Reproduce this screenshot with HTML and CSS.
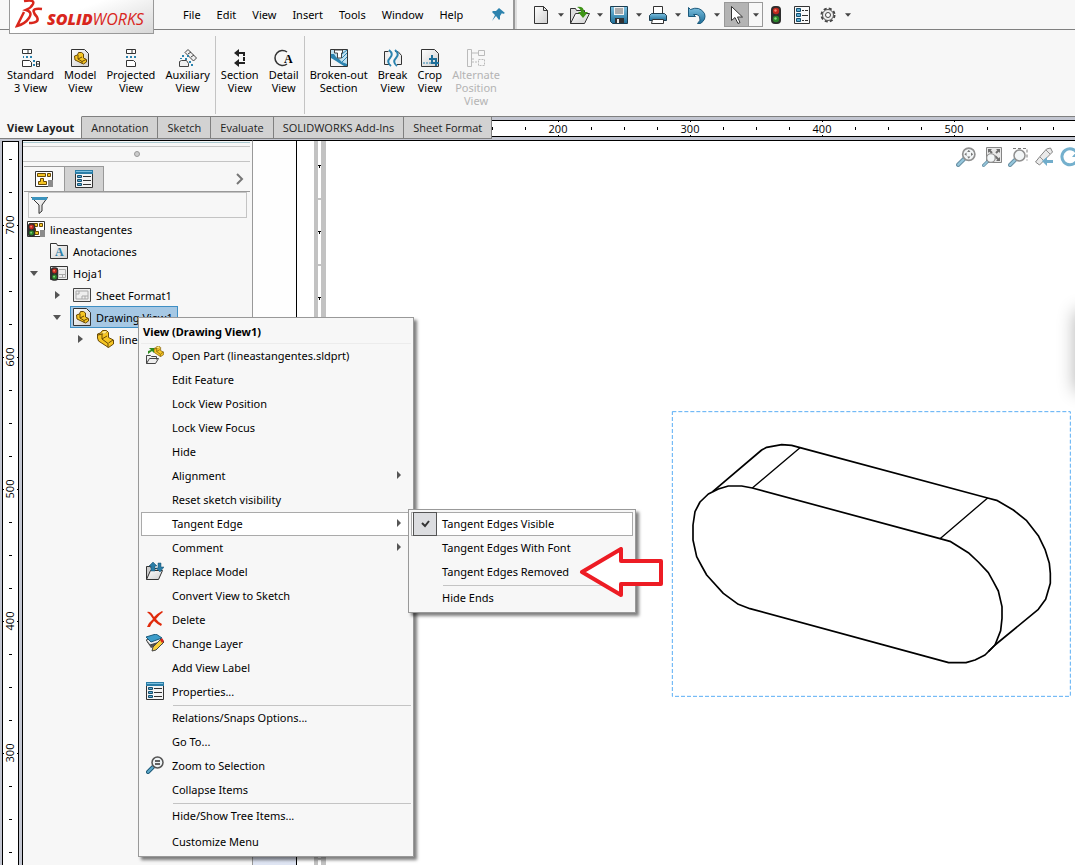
FILE: index.html
```html
<!DOCTYPE html>
<html lang="en">
<head>
  <meta charset="UTF-8">
  <title>SOLIDWORKS - lineastangentes</title>
  <meta name="viewport" content="width=device-width, initial-scale=1.0">
  <link rel="stylesheet" href="styles.css">
</head>
<body>

  <!-- shared icons -->
  <svg class="sprite" aria-hidden="true">
    <defs>
      <linearGradient id="paper" x1="0" y1="0" x2="1" y2="1">
        <stop offset="0" stop-color="#fff"/><stop offset="1" stop-color="#cfcfcf"/>
      </linearGradient>
      <linearGradient id="blue" x1="0" y1="0" x2="0" y2="1">
        <stop offset="0" stop-color="#7cc0e0"/><stop offset="1" stop-color="#1e6f99"/>
      </linearGradient>
    </defs>
    <symbol id="part" viewBox="0 0 18 18">
      <path d="M1.500 4l3-1 2-2.500 4 0 2 2v5l5 2.500v4l-5 3.500L2.500 11l-1-3z" fill="#f5c523" stroke="#6a4a06"/>
      <path d="M6 4v5l6 4.500v4M6 4l-4 1M6 4l5-2M12.500 13l4.500-3M6 9l5-3" fill="none" stroke="#6a4a06"/>
      <path d="M6 3l2-2 2 0 1 1-3 2z" fill="#ffe98a"/>
    </symbol>
    <symbol id="view" viewBox="0 0 18 18">
      <path d="M.5.5h13l4 4v13H.5z" fill="url(#paper)" stroke="#333"/>
      <path d="M3.500 7l3-1 1-2.500h3l2 1.500v4l3 1.500v2.500l-3 2-8.500-4z" fill="#f5c523" stroke="#6a4a06"/>
      <path d="M7 6v4l4 2.500v2M11 12.500l4-2M7 10l4-2" fill="none" stroke="#6a4a06"/>
    </symbol>
    <symbol id="list" viewBox="0 0 18 18">
      <path d="M.5.5h17v17H.5z" fill="#f4f4f4" stroke="#333"/>
      <path d="M0 0h18v4H0z" fill="#2b7da6"/><path d="M1 1h16v1H1z" fill="#7cc0e0"/>
      <path d="M2.500 5.500h4v2h-4zM2.500 9.500h4v2h-4zM2.500 13.500h4v2h-4z" fill="#59abd2" stroke="#174f6e"/>
      <path d="M8 6.500h8M8 10.500h8M8 14.500h8" stroke="#333"/>
    </symbol>
    <symbol id="options" viewBox="0 0 16 18">
      <path d="M.5.500h15v17H.5z" fill="#fafafa" stroke="#333"/>
      <path d="M2.500 2.500h4v3h-4zM2.500 7.500h4v3h-4zM2.500 12.500h4v3h-4z" fill="#59abd2" stroke="#174f6e"/>
      <path d="M8 4.500h2M11 4.500h3M8 9.500h6M8 14.500h2M11 14.500h3" stroke="#333"/>
    </symbol>
    <symbol id="traffic" viewBox="0 0 12 18">
      <rect x="1" y="0" width="10" height="18" rx="4" fill="#2d2d2d"/>
      <circle cx="6" cy="5" r="3.200" fill="#c0281d"/><circle cx="5.500" cy="4.500" r="1.200" fill="#ff8874"/>
      <circle cx="6" cy="13" r="3.200" fill="#2a852a"/><circle cx="5.500" cy="12.500" r="1.200" fill="#8fdc82"/>
    </symbol>
    <symbol id="drawing" viewBox="0 0 18 18">
      <path d="M.5 1.500h17v15H.5z" fill="#fff" stroke="#333"/>
      <path d="M2.500 3.500h8v3h-8zM12.500 3.500h3v3h-3zM5.500 8.500h3v3h3v3h-8v-3h2z" fill="#f5c523" stroke="#6a4a06"/>
      <path d="M13 10h5v7h-5z" fill="#8b8b8b"/>
    </symbol>
    <symbol id="lens" viewBox="0 0 18 18">
      <path d="M2 16l5-5" stroke="#1c5877" stroke-width="4" stroke-linecap="round"/>
      <path d="M2 16l5-5" stroke="#5eaacb" stroke-width="2" stroke-linecap="round"/>
      <circle cx="11.500" cy="6.500" r="5.500" fill="#eef2f4" stroke="#555" stroke-width="1.500"/>
    </symbol>
    <symbol id="caret" viewBox="0 0 7 4"><path d="M0 0h7L3.500 4z" fill="#444"/></symbol>
    <symbol id="right" viewBox="0 0 5 8"><path d="M0 0l5 4-5 4z" fill="#555"/></symbol>
    <symbol id="down" viewBox="0 0 8 5"><path d="M0 0h8L4 5z" fill="#555"/></symbol>
  </svg>

  <header class="titlebar">
    <div class="logo">
      <svg class="logo-mark" viewBox="0 0 28 28" aria-hidden="true">
        <path d="M9 1Q20-1 18 4Q16 8 11 10Q18 12 14 18Q10 24 2 26L9 12" fill="none" stroke="#d9261c" stroke-width="2.500"/>
        <path d="M27 9Q19 8 18.500 11Q19 14 22 17Q25 23 14 23" fill="none" stroke="#d9261c" stroke-width="2.500"/>
      </svg>
      <span class="logo-text"><b>SOLID</b>WORKS</span>
    </div>
    <nav class="menubar">
      <button>File</button>
      <button>Edit</button>
      <button>View</button>
      <button>Insert</button>
      <button>Tools</button>
      <button>Window</button>
      <button>Help</button>
    </nav>
    <button class="pin" aria-label="Pin menu">
      <svg width="13" height="13" viewBox="0 0 13 13"><path d="M7 0l6 5-2 1-1-1-2 3v3l-1 1-3-4-4 5 3-6-3-3 1-1h3l2-2z" fill="#2d83ae"/></svg>
    </button>
    <div class="quickbar">
      <div class="split">
        <button class="main" aria-label="New"><svg width="14" height="18" viewBox="0 0 14 18"><path d="M.5.5h9l4 4v13H.5z" fill="url(#paper)" stroke="#333"/><path d="M9.500.5v4h4" fill="none" stroke="#333"/></svg></button>
        <button class="more" aria-label="New options"><svg width="6" height="4"><use href="#caret"/></svg></button>
      </div>
      <div class="split">
        <button class="main" aria-label="Open"><svg width="20" height="18" viewBox="0 0 20 18"><path d="M.5 17.500v-15h5l1 2h8v4" fill="#ddd" stroke="#333"/><path d="M.5 17.500l5-10h14l-5 10z" fill="url(#paper)" stroke="#333"/><path d="M7 1q7-1 7 5h4l-5 6-5-6h3q0-3-4-5z" fill="#3f9417"/></svg></button>
        <button class="more" aria-label="Open options"><svg width="6" height="4"><use href="#caret"/></svg></button>
      </div>
      <div class="split">
        <button class="main" aria-label="Save"><svg width="18" height="18" viewBox="0 0 18 18"><path d="M.5.5h17v17h-15l-2-2z" fill="url(#blue)" stroke="#1b3d50"/><path d="M4 1h10v8H4z" fill="#f2f2f2"/><path d="M5 3h8M5 5h8M5 7h8" stroke="#666"/><path d="M5 12h9v5H5z" fill="#333"/><path d="M7 13h2v4H7z" fill="#eee"/></svg></button>
        <button class="more" aria-label="Save options"><svg width="6" height="4"><use href="#caret"/></svg></button>
      </div>
      <div class="split">
        <button class="main" aria-label="Print"><svg width="18" height="18" viewBox="0 0 18 18"><path d="M4.500 7.500v-7h9v7" fill="#fff" stroke="#333"/><path d="M.5 9.500l2-2h13l2 2v5H.5z" fill="url(#blue)" stroke="#1b3d50"/><path d="M3.500 13.500h11v4h-12z" fill="#fff" stroke="#333"/></svg></button>
        <button class="more" aria-label="Print options"><svg width="6" height="4"><use href="#caret"/></svg></button>
      </div>
      <div class="split">
        <button class="main" aria-label="Undo"><svg width="18" height="18" viewBox="0 0 18 18"><path d="M.5 1.500l2 2q9-4 14 4 2 6-4 10h-3q4-3 2-7-2-3-6-2l2 2H.5z" fill="url(#blue)" stroke="#1d5a7c"/></svg></button>
        <button class="more" aria-label="Undo options"><svg width="6" height="4"><use href="#caret"/></svg></button>
      </div>
      <div class="split pressed">
        <button class="main" aria-label="Select"><svg width="12" height="18" viewBox="0 0 12 18"><path d="M.5.5v14l3.500-3 3 6 2-1-2.500-5.500h5z" fill="#fff" stroke="#333"/></svg></button>
        <button class="more" aria-label="Select options"><svg width="6" height="4"><use href="#caret"/></svg></button>
      </div>
      <button class="tool" aria-label="Rebuild"><svg width="12" height="18"><use href="#traffic"/></svg></button>
      <button class="tool" aria-label="File properties"><svg width="16" height="18"><use href="#options"/></svg></button>
      <button class="tool" aria-label="Options"><svg width="16" height="16" viewBox="0 0 16 16"><circle cx="8" cy="8" r="6.500" fill="none" stroke="#444" stroke-width="2" stroke-dasharray="3 2.100"/><circle cx="8" cy="8" r="5.500" fill="#eee" stroke="#555"/><circle cx="8" cy="8" r="2.500" fill="#fff" stroke="#444"/></svg></button>
      <button class="more last" aria-label="More options"><svg width="6" height="4"><use href="#caret"/></svg></button>
    </div>
  </header>

  <div class="ribbon">
    <div class="group">
      <button>
        <svg width="18" height="18" viewBox="0 0 18 18"><path d="M.5.500h9v4h-9zM6 .5v4M.5 17.500v-6h7l2 2v4zM14.500 12.500h3v5h-3zM14.500 15h3" fill="#fff" stroke="#333"/><path d="M1 7h1v2H1zM4 7h2v2H4zM8 7h2v2H8zM11 11h2v2h-2zM11 15h2v2h-2z" fill="#2b83af"/></svg>
        <span>Standard<br>3 View</span>
      </button>
      <button>
        <svg width="18" height="18"><use href="#view"/></svg>
        <span>Model<br>View</span>
      </button>
      <button>
        <svg width="18" height="18" viewBox="0 0 18 18"><path d="M4.500.500h9v4h-9zM10 .5v4M4.500 17.500v-6h7l2 2v4z" fill="#fff" stroke="#333"/><path d="M4 7h2v2H4zM8 7h2v2H8zM12 7h2v2h-2z" fill="#2b83af"/></svg>
        <span>Projected<br>View</span>
      </button>
      <button>
        <svg width="18" height="18" viewBox="0 0 18 18"><path d="M.5 17.500v-5l2-1h5l2 3v3zM9 .5l8.500 8.500-3 3L6 3.500zM9 5l3-2M12 8l3-2" fill="#f0f0f0" stroke="#444"/><path d="M3 6h2v2H3zM6 9h2v2H6zM10 12h2v2h-2zM1 9h2v1H1zM12 15h2v2h-2zM8 6h2v2H8z" fill="#2b83af"/></svg>
        <span>Auxiliary<br>View</span>
      </button>
    </div>
    <div class="group">
      <button>
        <svg width="18" height="18" viewBox="0 0 18 18"><path d="M13 4H6M13 14H6" stroke="#222" stroke-width="2"/><path d="M3 4l5-4v8zM3 14l5-4v8z" fill="#222"/><path d="M13 3v12" stroke="#222" stroke-width="2" stroke-dasharray="4 1"/></svg>
        <span>Section<br>View</span>
      </button>
      <button>
        <svg width="20" height="18" viewBox="0 0 20 18"><path d="M13 3a7.500 7.500 0 1 0 0 12" fill="none" stroke="#333" stroke-width="1.500"/><text x="10" y="14" class="serif-glyph">A</text></svg>
        <span>Detail<br>View</span>
      </button>
    </div>
    <div class="group">
      <button>
        <svg width="18" height="18" viewBox="0 0 18 18"><path d="M.5.500h17v17H.5z" fill="#bfe0ef" stroke="#333"/><path d="M1 7l5 1 2 3 5 2 4 4H1z" fill="#f4f4f4"/><path d="M1 5l3 0 2 3 3 2 3 3 5 2v2h-3l-5-3-3-2-5-3z" fill="#2b83af"/><path d="M12 5l5-4M12 9l5-5M12 13l5-5" stroke="#2b83af"/><path d="M4.500 1h8v3h-1v5h-4V4h-3z" fill="#fff" stroke="#444"/></svg>
        <span>Broken-out<br>Section</span>
      </button>
      <button>
        <svg width="18" height="18" viewBox="0 0 18 18"><path d="M4.500 2.500h-4v13h5M11 2.500h3l3.500 4v9H13" fill="#eee" stroke="#333"/><path d="M5 1q5 4 1 8t1 8M11 1q5 4 1 8t1 8" fill="none" stroke="#2b83af" stroke-width="2"/></svg>
        <span>Break<br>View</span>
      </button>
      <button>
        <svg width="18" height="18" viewBox="0 0 18 18"><path d="M.5.500h13l4 4v13H.5z" fill="url(#paper)" stroke="#333"/><path d="M11 6v8h7M8 10h7v7" fill="none" stroke="#1f6f99" stroke-width="2"/><path d="M2 14h8" stroke="#2b83af" stroke-dasharray="2 1"/></svg>
        <span>Crop<br>View</span>
      </button>
      <button disabled>
        <svg width="18" height="18" viewBox="0 0 18 18"><path d="M.5.500h4v17h-4zM11.500 1.500h6v5h-6zM5 4h6" fill="none" stroke="#bbb"/><path d="M11.500 10.500h6v6h-6zM5 13h6M5 10h3" fill="none" stroke="#bbb" stroke-dasharray="2 1"/></svg>
        <span>Alternate<br>Position<br>View</span>
      </button>
    </div>
  </div>

  <div class="tabrow">
    <div class="tabs">
      <button class="active">View Layout</button>
      <button>Annotation</button>
      <button>Sketch</button>
      <button>Evaluate</button>
      <button>SOLIDWORKS Add-Ins</button>
      <button>Sheet Format</button>
    </div>
    <div class="ruler-h">
      <svg width="100%" height="15">
        <defs>
          <pattern id="ticks-h" width="132" height="15" patternUnits="userSpaceOnUse">
            <path d="M0 6h1v3H0zM33 6h1v3h-1zM99 6h1v3h-1zM66 0h1v1h-1zM66 14h1v1h-1z"/>
          </pattern>
        </defs>
        <rect width="100%" height="15" fill="url(#ticks-h)"/>
        <text x="66" y="12">200</text>
        <text x="198" y="12">300</text>
        <text x="330" y="12">400</text>
        <text x="462" y="12">500</text>
      </svg>
    </div>
  </div>

  <main class="workspace">
    <div class="ruler-v">
      <svg width="15" height="100%">
        <defs>
          <pattern id="ticks-v" width="15" height="132" patternUnits="userSpaceOnUse">
            <path d="M6 17h3v1H6zM6 50h3v1H6zM6 116h3v1H6zM0 83h1v1H0zM14 83h1v1h-1z"/>
          </pattern>
        </defs>
        <rect width="15" height="100%" fill="url(#ticks-v)"/>
        <text transform="translate(11 83) rotate(-90)">700</text>
        <text transform="translate(11 215) rotate(-90)">600</text>
        <text transform="translate(11 347) rotate(-90)">500</text>
        <text transform="translate(11 479) rotate(-90)">400</text>
        <text transform="translate(11 611) rotate(-90)">300</text>
      </svg>
    </div>

    <aside class="panel">
      <div class="grip"><i></i></div>
      <div class="panel-tabs">
        <button aria-label="Feature tree"><svg width="18" height="18"><use href="#drawing"/></svg></button>
        <button class="on" aria-label="Property manager"><svg width="18" height="18"><use href="#list"/></svg></button>
        <button class="expand" aria-label="Expand"><svg width="8" height="12" viewBox="0 0 8 12"><path d="M1 1l5 5-5 5" fill="none" stroke="#777" stroke-width="2"/></svg></button>
      </div>
      <div class="filter">
        <svg width="18" height="18" viewBox="0 0 18 18"><path d="M.5 1.500h16L11 9v6l-3 2.500V9z" fill="url(#paper)" stroke="#333"/><path d="M1 1h15v3H1z" fill="#3b93bd"/></svg>
        <input type="text" aria-label="Filter">
      </div>
      <ul class="tree">
        <li><div class="node root"><svg width="18" height="18" viewBox="0 0 18 18"><use href="#drawing"/><use href="#traffic" x="0" y="3" width="9" height="14"/></svg>lineastangentes</div>
          <ul>
            <li><div class="node"><span class="twist"></span><svg width="18" height="18" viewBox="0 0 18 18"><path d="M.5 16.500v-15h6l1 2h10v13z" fill="url(#paper)" stroke="#333"/><text x="5" y="14" class="serif-glyph blue">A</text></svg>Anotaciones</div></li>
            <li><div class="node"><span class="twist"><svg width="8" height="5"><use href="#down"/></svg></span><svg width="18" height="18" viewBox="0 0 18 18"><path d="M.5 2.500h17v13H.5z" fill="#eee" stroke="#333"/><path d="M9 5.500h6.500v8H9M9 10.500h6M12.500 10v3" fill="none" stroke="#aaa"/><use href="#traffic" x="0" y="3" width="9" height="14"/></svg>Hoja1</div>
              <ul>
                <li><div class="node"><span class="twist"><svg width="5" height="8"><use href="#right"/></svg></span><svg width="18" height="18" viewBox="0 0 18 18"><path d="M.5 2.500h17v13H.5z" fill="#eee" stroke="#444"/><path d="M3 13V5h12v8zM3 8h3V5M9 13v-3h6M12 10v3" fill="none" stroke="#aaa"/></svg>Sheet Format1</div></li>
                <li><div class="node"><span class="twist"><svg width="8" height="5"><use href="#down"/></svg></span><span class="selected"><svg width="18" height="18"><use href="#view"/></svg>Drawing View1</span></div>
                  <ul>
                    <li><div class="node"><span class="twist"><svg width="5" height="8"><use href="#right"/></svg></span><svg width="18" height="18"><use href="#part"/></svg>lineastangentes</div></li>
                  </ul>
                </li>
              </ul>
            </li>
          </ul>
        </li>
      </ul>
    </aside>

    <div class="gutter"></div>

    <section class="canvas">
      <!-- sheet border -->
      <svg class="sheet-edge" width="12" height="100%">
        <defs>
          <pattern id="edge" width="12" height="66" patternUnits="userSpaceOnUse">
            <path d="M0 0h4v66H0zM7 0h5v66H7z" fill="#c2c2c2"/>
            <path d="M4 0h3v66H4z" fill="#fff"/>
            <path d="M0 57h12v2H0z" fill="#c2c2c2"/>
            <path d="M4 24h3v1h-1v2H5v-2H4z"/>
          </pattern>
        </defs>
        <rect width="12" height="100%" fill="url(#edge)"/>
      </svg>

      <div class="hud">
        <button aria-label="Zoom to fit"><svg width="20" height="20" viewBox="0 0 18 18"><use href="#lens"/><path d="M11.500 2.500l1.500 2h-3zM11.500 10.500l1.500-2h-3zM7.500 6.500l2-1.500v3zM15.500 6.500l-2-1.500v3z" fill="#333"/></svg></button>
        <button aria-label="Zoom to area"><svg width="20" height="20" viewBox="0 0 20 20"><path d="M4.500.5h15v15h-15z" fill="#ddd" stroke="#444"/><path d="M6 2h4L6 6zM18 2h-4l4 4zM18 14h-4l4-4z" fill="#222"/><path d="M7 3l3 3M17 3l-3 3M17 13l-4-4" stroke="#222" stroke-width="2"/><use href="#lens" x="0" y="6" width="14" height="14"/></svg></button>
        <button aria-label="Zoom in/out"><svg width="20" height="20" viewBox="0 0 20 20"><path d="M5 1.500h14v12" fill="none" stroke="#333" stroke-dasharray="3 2"/><use href="#lens" x="0" y="2" width="18" height="18"/></svg></button>
        <button aria-label="Previous view"><svg width="20" height="20" viewBox="0 0 20 20"><path d="M1.500 15l4-5 7-8 4-1 2 4-8 8-5 5z" fill="#e0e0e0" stroke="#444"/><path d="M6 10l4 4M12 3l4 4" stroke="#555"/><path d="M8 14l5-4v3h6v3h-6v3z" fill="#2682b0"/></svg></button>
        <button aria-label="Rotate view"><svg width="20" height="20" viewBox="0 0 20 20"><path d="M16 15a8 8 0 1 1 1-9" fill="none" stroke="#2a86b3" stroke-width="3"/><path d="M19 2v8h-7z" fill="#2a86b3"/></svg></button>
      </div>

      <div class="flyout"></div>

      <svg class="drawing-view" width="415" height="310" viewBox="0 0 1245 930" role="img" aria-label="Drawing View1">
        <rect x="37" y="35" width="1194" height="854" class="bounds"/>
        <g class="edges">
          <path d="M277 264L840 416L870 424L925 458L955 486L985 518L1000 545L1015 573L1026 620L1026 655L1022 692L1005 735L975 765L945 780L918 788L866 788L270 626L235 613L190 580L140 525L125 498L110 470L99 420L99 375L105 335L120 306L145 282L175 267L205 258L245 258Z"/>
          <path d="M158 275L305 150L320 142L365 134L395 136L420 143L983 294L1010 301L1060 330L1100 362L1135 407L1155 448L1168 490L1171 520L1171 550L1157 598L1135 628L1005 735L985 755"/>
          <path d="M277 264L420 143M840 416L983 294" class="tangent"/>
        </g>
      </svg>
    </section>
  </main>

  <div class="menu context">
    <h2>View (Drawing View1)</h2>
    <ul>
      <li><button><svg width="18" height="18" viewBox="0 0 18 18"><use href="#part" x="7" y="0" width="11" height="11"/><path d="M.5 17.500V9.500h4l1 1h5v3M.5 17.500l3-5h9l-3 5z" fill="#eee" stroke="#444"/><path d="M2 8V5l3-1-2-2h5v5L6 5z" fill="#2e8b1e"/></svg>Open Part (lineastangentes.sldprt)</button></li>
      <li><button>Edit Feature</button></li>
      <li><button>Lock View Position</button></li>
      <li><button>Lock View Focus</button></li>
      <li><button>Hide</button></li>
      <li><button class="has-sub">Alignment</button></li>
      <li><button>Reset sketch visibility</button></li>
      <li class="open">
        <button class="has-sub hover">Tangent Edge</button>
        <div class="menu submenu">
          <ul>
            <li><button class="hover checked"><span class="check"><svg width="9" height="8" viewBox="0 0 9 8"><path d="M1 3l3 3 4-5" fill="none" stroke="#333" stroke-width="2"/></svg></span>Tangent Edges Visible</button></li>
            <li><button>Tangent Edges With Font</button></li>
            <li><button>Tangent Edges Removed</button></li>
            <li class="sep"></li>
            <li><button>Hide Ends</button></li>
          </ul>
        </div>
      </li>
      <li><button class="has-sub">Comment</button></li>
      <li><button><svg width="18" height="18" viewBox="0 0 18 18"><path d="M.5 17.500v-13h4l1 2h9v3" fill="#ccc" stroke="#333"/><path d="M.5 17.500l4-9h12l-4 9z" fill="url(#paper)" stroke="#333"/><path d="M7 0l4 4H9v5H5V4H3zM12 1h3v4h3l-4 5-4-4h2z" fill="#2b7da6" stroke="#174f6e" stroke-width=".5"/></svg>Replace Model</button></li>
      <li><button>Convert View to Sketch</button></li>
      <li><button><svg width="18" height="18" viewBox="0 0 18 18"><path d="M1 2q4-1 7 5 4-4 8-6l1 1q-4 3-7 7 3 4 6 5l-1 2q-4-2-7-5-3 3-4 6l-3 0q2-5 6-8Q5 5 1 2z" fill="#e02b0c"/></svg>Delete</button></li>
      <li><button><svg width="18" height="18" viewBox="0 0 18 18"><path d="M1 8l4 6 12-4-3-4z" fill="#555"/><path d="M0 6l4 5 13-4-4-4z" fill="#eee" stroke="#444"/><path d="M0 3l10-3 6 4L5 8z" fill="#3c9cc9" stroke="#1a5a7b"/><path d="M6 17l1-4 8-8 3 3-8 8z" fill="#f7cf3a" stroke="#444"/><path d="M14 6l2-2 2 3-2 2z" fill="#d4251b"/></svg>Change Layer</button></li>
      <li><button>Add View Label</button></li>
      <li><button><svg width="18" height="18"><use href="#list"/></svg>Properties...</button></li>
      <li class="sep"></li>
      <li><button>Relations/Snaps Options...</button></li>
      <li><button>Go To...</button></li>
      <li><button><svg width="18" height="18" viewBox="0 0 18 18"><use href="#lens"/><path d="M9 5h5M9 8h5" stroke="#333" stroke-width="1.500"/></svg>Zoom to Selection</button></li>
      <li><button>Collapse Items</button></li>
      <li class="sep"></li>
      <li><button>Hide/Show Tree Items...</button></li>
      <li class="sep blank"></li>
      <li><button>Customize Menu</button></li>
    </ul>
  </div>

  <svg class="pointer" width="86" height="52" viewBox="0 0 86 52" aria-hidden="true">
    <path d="M3 25L42 2V14H82V37H42V48Z" fill="#fff" stroke="#ed1c24" stroke-width="4" stroke-linejoin="round"/>
  </svg>

</body>
</html>
```

FILE: styles.css
```css
:root {
  --face: #f7f7f7;
  --line: #808080;
  --frame: #c3c6d1;
  --tab: #d2d2d2;
}

* {
  margin: 0;
  padding: 0;
  box-sizing: border-box;
}

body {
  position: relative;
  display: flex;
  flex-direction: column;
  height: 100vh;
  overflow: hidden;
  background: #fff;
  color: #000;
  font-family: "Noto Sans", "Open Sans", sans-serif;
  font-size: 11px;
  line-height: 13px;
}

button, input {
  border: 0;
  background: none;
  color: inherit;
  font: inherit;
}

ul {
  list-style: none;
}

svg {
  flex: none;
}

.sprite {
  position: absolute;
  width: 0;
  height: 0;
}

.serif-glyph {
  font: bold 12px "Liberation Serif", serif;
}

.serif-glyph.blue {
  fill: #2b7da6;
}

/* title bar */
.titlebar {
  display: flex;
  align-items: center;
  height: 30px;
  padding-left: 175px;
  background: var(--face);
  border-bottom: 1px solid var(--line);
}

.logo {
  position: absolute;
  top: 0;
  left: 9px;
  z-index: 2;
  display: flex;
  align-items: center;
  gap: 4px;
  width: 145px;
  height: 34px;
  padding-left: 5px;
  background: linear-gradient(160deg, #fff 40%, #d8d8d8);
  border: 1px solid #999;
  border-top: 0;
}

.logo-mark {
  width: 28px;
  height: 28px;
  margin-bottom: 6px;
}

.logo-text {
  margin-top: 4px;
  color: #d9261c;
  font: italic 16px/20px "Open Sans", sans-serif;
}

.logo-text b {
  font-weight: 800;
}

.menubar {
  display: flex;
}

.menubar button {
  padding: 0 8px;
}

.pin {
  display: flex;
  width: 30px;
  height: 29px;
  align-items: center;
  justify-content: center;
  margin-left: 12px;
}

.quickbar {
  display: flex;
  align-items: center;
  height: 29px;
  padding-left: 14px;
  border-left: 2px solid #999;
  box-shadow: inset 2px 0 #ddd;
}

.split {
  display: flex;
  height: 25px;
}

.main, .more, .tool {
  display: flex;
  align-items: center;
  justify-content: center;
}

.main {
  width: 24px;
}

.more {
  width: 15px;
}

.more.last {
  width: 13px;
}

.tool {
  width: 26px;
}

.split.pressed {
  border: 1px solid #999;
}

.pressed .main {
  background: #b4b4b4;
  border-right: 1px solid #999;
}

.pressed .more {
  width: 13px;
}

/* ribbon */
.ribbon {
  display: flex;
  height: 86px;
  padding: 6px 0 2px 2px;
  background: var(--face);
}

.group {
  display: flex;
  align-items: flex-start;
}

.group + .group {
  border-left: 1px solid #c4c4c4;
}

.group button {
  display: flex;
  flex-direction: column;
  align-items: center;
  gap: 1px;
  padding: 13px 5px 0;
}

.group button:disabled {
  color: #b4b4b4;
}

/* command tabs + horizontal ruler */
.tabrow {
  display: flex;
  height: 24px;
  background: var(--frame);
}

.tabs {
  display: flex;
  height: 23px;
  background: var(--tab);
  border-bottom: 1px solid var(--line);
}

.tabs button {
  padding: 0 9px;
  border: 1px solid var(--line);
  border-width: 1px 1px 0 0;
  color: #222;
  font-family: "Open Sans", sans-serif;
}

.tabs .active {
  padding: 0 7px;
  background: var(--face);
  border-top-color: var(--face);
  font-weight: bold;
}

.ruler-h {
  flex: 1;
  min-width: 0;
  padding-top: 3px;
  border-top: 1px solid var(--line);
}

.ruler-h svg {
  display: block;
  box-sizing: content-box;
  background: #fff;
  border: solid #000;
  border-width: 1px 0;
}

.ruler-h text, .ruler-v text {
  font: 11px "Open Sans", sans-serif;
  text-anchor: middle;
}

/* workspace */
.workspace {
  display: flex;
  flex: 1;
  min-height: 0;
}

.ruler-v {
  width: 22px;
  padding: 1px 3px 0 2px;
  background: var(--frame);
}

.ruler-v svg {
  display: block;
  box-sizing: content-box;
  background: #fff;
  border: 1px solid #000;
}

.panel {
  width: 231px;
  background: var(--face);
  border: solid #000;
  border-width: 1px 1px 0;
  border-right-color: #999;
}

.grip {
  display: flex;
  align-items: center;
  justify-content: center;
  height: 21px;
  margin-right: 2px;
  padding-top: 5px;
  background: linear-gradient(#f7f7f7 1px, #a9c8cf 1px 2px, #f7f7f7 2px 5px, #c4c4c4 5px 6px, #f7f7f7 6px);
  border-bottom: 1px solid #c4c4c4;
}

.grip i {
  width: 6px;
  height: 6px;
  background: #ccc;
  border: 1px solid #999;
  border-radius: 50%;
}

.panel-tabs {
  display: flex;
  height: 26px;
  margin: 4px 2px 0 1px;
  border-bottom: 1px solid #999;
}

.panel-tabs button {
  display: flex;
  align-items: center;
  justify-content: center;
  width: 40px;
  border-top: 1px solid #999;
}

.panel-tabs .on {
  background: #d2d2d2;
  border: 1px solid #999;
  border-bottom: 0;
}

.panel-tabs .expand {
  width: 20px;
  margin-left: auto;
  border: 0;
}

.filter {
  display: flex;
  align-items: center;
  gap: 4px;
  height: 26px;
  margin: 0 5px;
  padding-left: 2px;
  border: 1px solid #c4c4c4;
}

.filter input {
  flex: 1;
  min-width: 0;
  outline: 0;
}

.tree ul {
  margin-left: 23px;
}

.tree > li > ul {
  margin-left: 0;
}

.node {
  display: flex;
  align-items: center;
  gap: 5px;
  height: 22px;
  white-space: nowrap;
}

.node.root {
  padding-left: 4px;
}

.twist {
  display: flex;
  justify-content: center;
  width: 22px;
}

.selected {
  display: flex;
  align-items: center;
  gap: 5px;
  height: 22px;
  margin-left: -3px;
  padding: 0 4px 0 2px;
  background: #a6c8e4;
  border: 1px solid #3f8fc4;
}

.gutter {
  width: 44px;
  background: linear-gradient(#fefefe 40%, #dfe5f3);
  border-top: 1px solid #000;
  border-right: 1px solid #000;
}

.canvas {
  position: relative;
  display: flex;
  flex: 1;
  align-items: flex-start;
  justify-content: space-between;
  min-width: 0;
  overflow: hidden;
  border-top: 1px solid #000;
}

.sheet-edge {
  margin-left: 17px;
}

.hud {
  display: flex;
  gap: 6px;
  margin: 6px -5px 0 0;
  opacity: 0.65;
}

.hud button {
  display: flex;
}

/* side pane hidden past the right edge, only its shadow shows */
.flyout {
  position: absolute;
  top: 170px;
  left: 100%;
  width: 40px;
  height: 80px;
  box-shadow: 0 0 18px rgba(0, 0, 0, 0.3);
}

.drawing-view {
  position: absolute;
  top: 259px;
  left: 363px;
}

.bounds {
  fill: none;
  stroke: #5aaef5;
  stroke-width: 3;
  stroke-dasharray: 12 6;
}

.edges {
  fill: none;
  stroke: #000;
  stroke-width: 5;
  stroke-linejoin: round;
}

.tangent {
  stroke-width: 4;
}

/* menus */
.menu {
  position: absolute;
  z-index: 5;
  padding: 2px;
  background: var(--face);
  border: 1px solid #999;
  box-shadow: 3px 3px 3px rgba(0, 0, 0, 0.5);
}

.context {
  top: 317px;
  left: 138px;
  width: 276px;
}

.menu h2 {
  height: 24px;
  padding-left: 2px;
  border-bottom: 1px solid #ececec;
  font-size: 11px;
  line-height: 24px;
}

.menu li {
  position: relative;
}

.menu button {
  display: flex;
  align-items: center;
  width: 100%;
  height: 24px;
  padding: 0 0 2px 31px;
  text-align: left;
  white-space: nowrap;
}

.menu button > svg {
  margin: 0 8px 0 -26px;
}

.menu .hover {
  padding-left: 30px;
  background: #fff;
  border: 1px solid #aaa;
}

.has-sub::after {
  content: "";
  margin: 0 10px 0 auto;
  border: 4px solid transparent;
  border-right: 0;
  border-left: 4px solid #555;
}

.has-sub.hover::after {
  margin-right: 9px;
}

.menu .sep {
  height: 2px;
  margin-left: 32px;
  border-bottom: 1px solid #c4c4c4;
}

.menu .blank {
  border-color: transparent;
}

.submenu {
  top: -3px;
  left: 267px;
  width: 228px;
}

.menu .checked {
  padding-left: 1px;
}

.check {
  display: flex;
  align-items: center;
  justify-content: center;
  width: 24px;
  height: 24px;
  margin: 0 5px -2px 0;
  background: #dcdde0;
  border: 1px solid #555;
}

/* callout arrow over the submenu */
.pointer {
  position: absolute;
  top: 547px;
  left: 579px;
  z-index: 6;
}
```
